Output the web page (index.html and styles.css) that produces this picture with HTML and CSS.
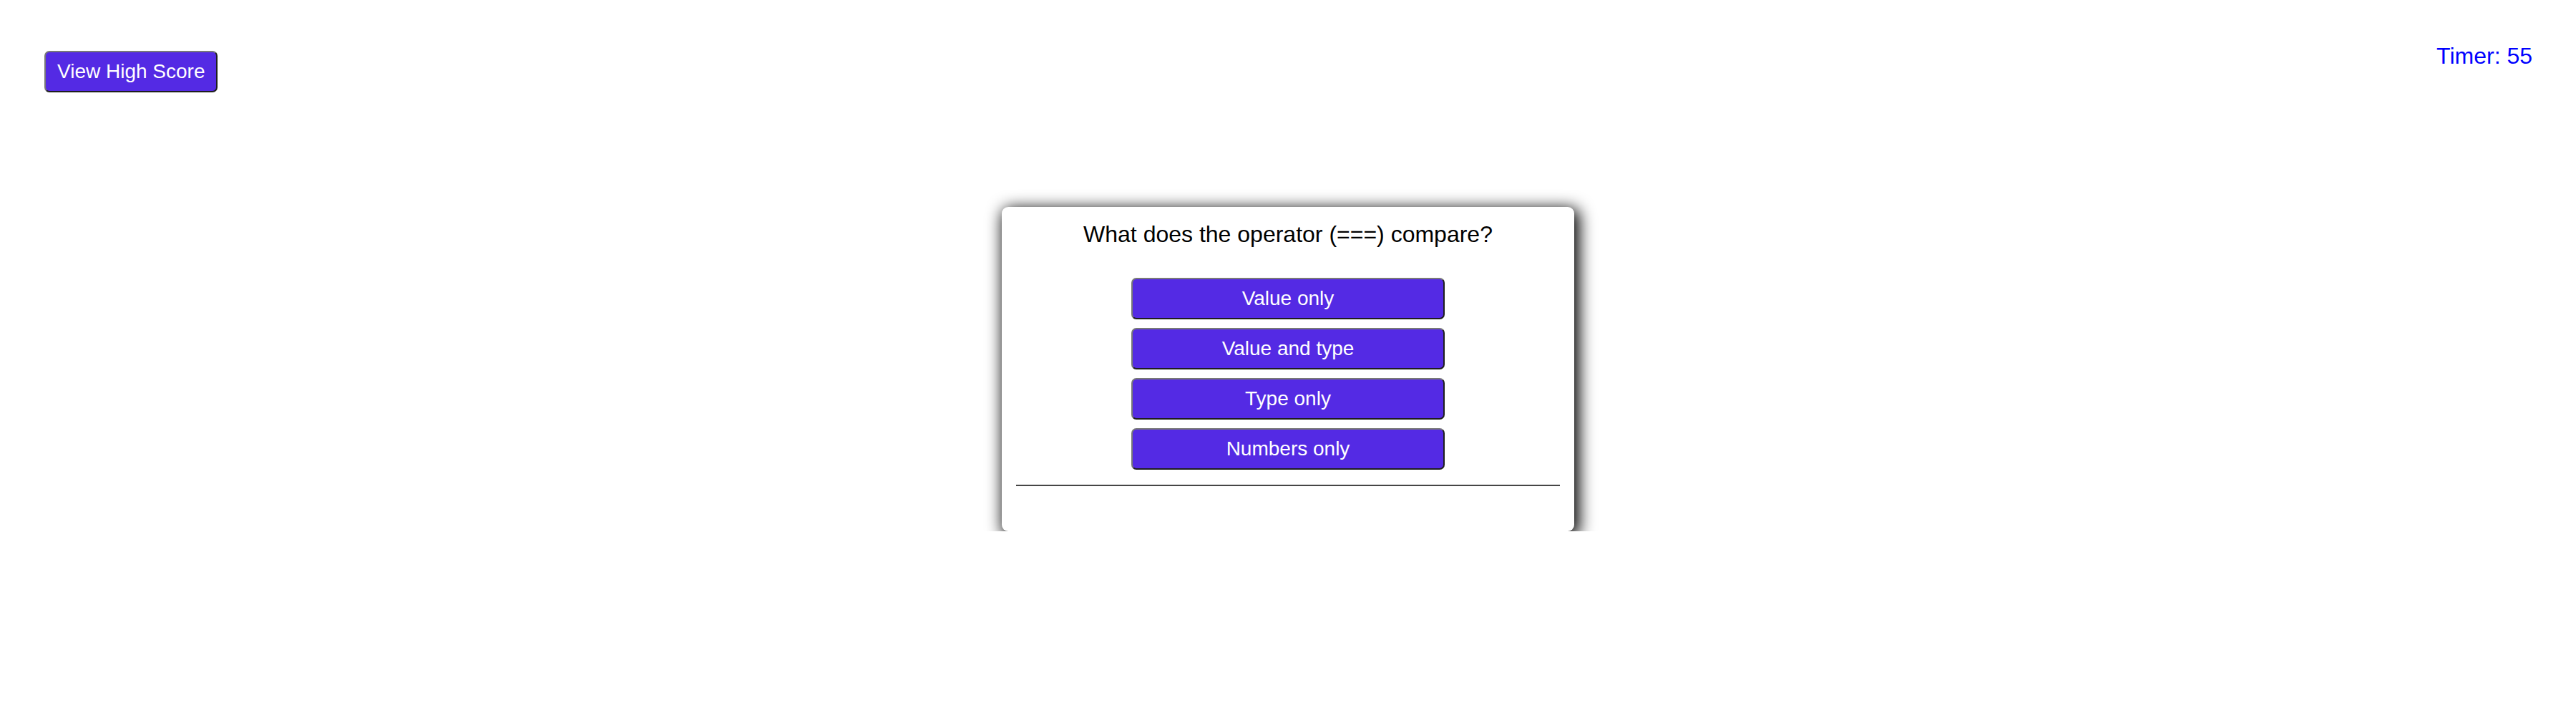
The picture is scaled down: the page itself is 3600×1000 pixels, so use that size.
FILE: index.html
```html
<!DOCTYPE html>
<html lang="en">
<head>
<meta charset="utf-8">
<title>Code Quiz</title>
<link rel="stylesheet" href="styles.css">
</head>
<body>
<header class="topbar">
  <button class="btn btn-score">View High Score</button>
  <div class="timer">Timer: 55</div>
</header>
<main class="stage">
  <section class="card">
    <div class="question">What does the operator (===) compare?</div>
    <div class="choices">
      <button class="btn btn-choice">Value only</button>
      <button class="btn btn-choice">Value and type</button>
      <button class="btn btn-choice">Type only</button>
      <button class="btn btn-choice">Numbers only</button>
    </div>
    <hr class="divider">
    <div class="result"></div>
  </section>
</main>
</body>
</html>
```
FILE: styles.css
```css
html, body {
  margin: 0;
  padding: 0;
  background: #ffffff;
  font-family: "Liberation Sans", Arial, sans-serif;
}

.topbar {
  display: flex;
  justify-content: space-between;
  align-items: flex-start;
  padding: 60px 61px 0 62px;
}

.btn {
  font-family: "Liberation Sans", Arial, sans-serif;
  font-size: 28px;
  line-height: 32px;
  color: #ffffff;
  background: #542ae4;
  border-width: 2px;
  border-style: solid;
  border-color: #787878 #1e1e1e #1e1e1e #787878;
  border-radius: 7px;
  padding: 11px 16px;
  margin: 0;
  white-space: nowrap;
  cursor: pointer;
}

.btn-score {
  margin-top: 11px;
}

.timer {
  font-size: 32px;
  line-height: 37px;
  color: #0000ff;
}

.stage {
  display: flex;
  justify-content: center;
  margin-top: 160px;
}

.card {
  width: 760px;
  padding: 20px;
  background: #ffffff;
  border-radius: 9px;
  box-shadow: 4px 5px 22px 3px #000000;
}

.question {
  font-size: 32px;
  line-height: 37px;
  text-align: center;
  color: #000000;
  margin-bottom: 42px;
}

.choices {
  display: flex;
  flex-direction: column;
  align-items: center;
  gap: 12px;
}

.btn-choice {
  width: 438px;
  height: 58px;
  padding: 0 20px;
}

.divider {
  margin: 21px 0 0 0;
  border: 0;
  border-top: 1px solid #000000;
  border-bottom: 1px solid #7a7a7a;
  height: 0;
}

.result {
  height: 43px;
}
```
